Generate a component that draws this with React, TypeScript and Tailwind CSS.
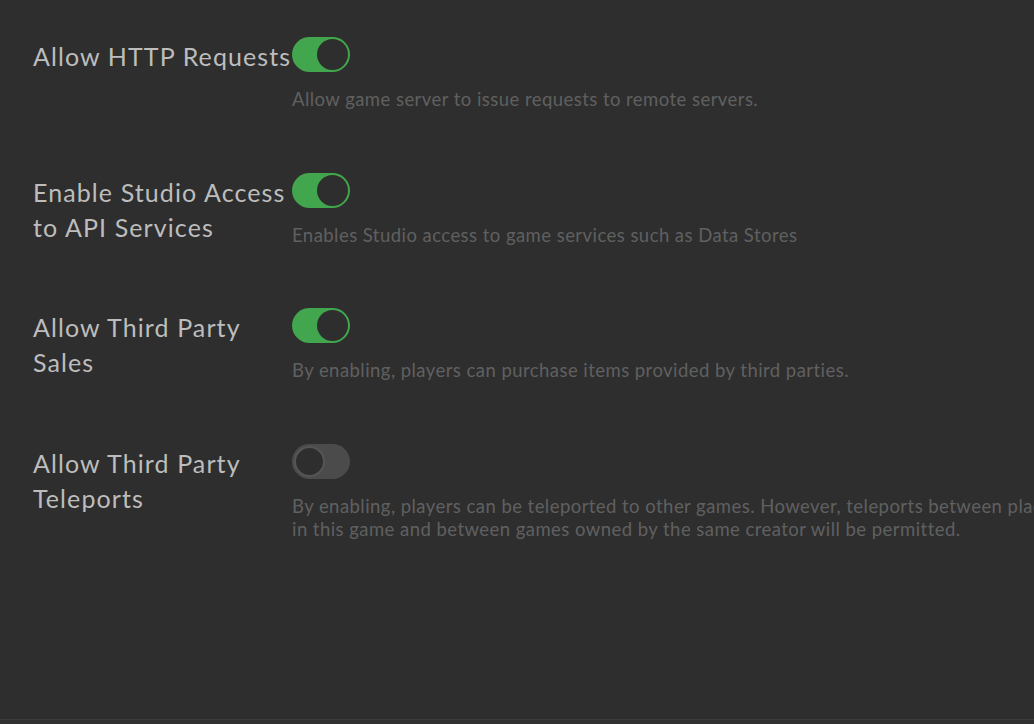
import React, { useState } from 'react';

interface Setting {
  id: string;
  label: string;
  description: React.ReactNode;
  enabled: boolean;
}

const initialSettings: Setting[] = [
  {
    id: 'http',
    label: 'Allow HTTP Requests',
    description: 'Allow game server to issue requests to remote servers.',
    enabled: true,
  },
  {
    id: 'studio',
    label: 'Enable Studio Access to API Services',
    description: 'Enables Studio access to game services such as Data Stores',
    enabled: true,
  },
  {
    id: 'sales',
    label: 'Allow Third Party Sales',
    description: 'By enabling, players can purchase items provided by third parties.',
    enabled: true,
  },
  {
    id: 'teleports',
    label: 'Allow Third Party Teleports',
    description: (
      <>
        By enabling, players can be teleported to other games. However, teleports between places
        <br />
        in this game and between games owned by the same creator will be permitted.
      </>
    ),
    enabled: false,
  },
];

const Toggle: React.FC<{ on: boolean; onClick: () => void }> = ({ on, onClick }) => (
  <button
    onClick={onClick}
    className={`flex h-[35px] w-[58px] shrink-0 items-center rounded-full p-[2px] ${
      on ? 'justify-end bg-[#41a64d]' : 'justify-start bg-[#4b4b4b]'
    }`}
  >
    <span
      className={`block h-[31px] w-[31px] rounded-full bg-[#2e2e2e] ${on ? '' : 'border-2 border-[#555555]'}`}
    />
  </button>
);

export default function App() {
  const [settings, setSettings] = useState(initialSettings);

  const toggle = (id: string) =>
    setSettings(s => s.map(x => (x.id === id ? { ...x, enabled: !x.enabled } : x)));

  return (
    <div
      className="flex h-[724px] w-full flex-col overflow-hidden bg-[#2e2e2e]"
      style={{ fontFamily: 'Lato, "Noto Sans", sans-serif' }}
    >
      <div className="flex-1 pl-[33px] pt-[37px]">
        {settings.map(s => (
          <div key={s.id} className="flex h-[135.5px]">
            <div className="w-[259px] shrink-0 pt-[2px] text-[25px] leading-[35px] tracking-[1.1px] text-[#bdbdbd]">
              {s.label}
            </div>
            <div className="flex flex-col">
              <Toggle on={s.enabled} onClick={() => toggle(s.id)} />
              <div className="mt-[16px] whitespace-nowrap text-[18.5px] leading-[23px] tracking-[0.45px] text-[#606060]">
                {s.description}
              </div>
            </div>
          </div>
        ))}
      </div>
      <div className="h-[5px] border-t border-[#3b3b3b] bg-[#313131]" />
    </div>
  );
}
